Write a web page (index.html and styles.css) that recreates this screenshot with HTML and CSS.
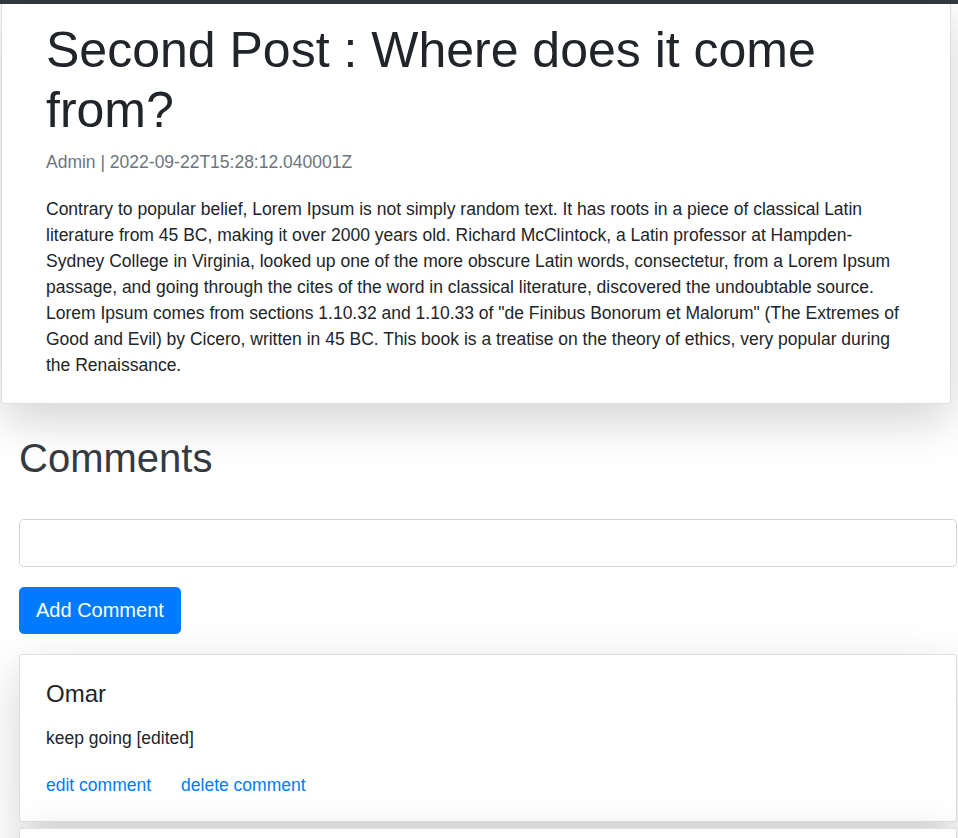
FILE: index.html
```html
<!DOCTYPE html>
<html lang="en">
<head>
<meta charset="utf-8">
<title>Second Post : Where does it come from?</title>
<link rel="stylesheet" href="styles.css">
</head>
<body>
<div class="navbar-edge"></div>
<main class="page">
  <article class="post-card">
    <h1 class="post-title">Second Post : Where does it come from?</h1>
    <p class="post-meta">Admin | 2022-09-22T15:28:12.040001Z</p>
    <p class="post-body">Contrary to popular belief, Lorem Ipsum is not simply random text. It has roots in a piece of classical Latin literature from 45 BC, making it over 2000 years old. Richard McClintock, a Latin professor at Hampden-Sydney College in Virginia, looked up one of the more obscure Latin words, consectetur, from a Lorem Ipsum passage, and going through the cites of the word in classical literature, discovered the undoubtable source. Lorem Ipsum comes from sections 1.10.32 and 1.10.33 of "de Finibus Bonorum et Malorum" (The Extremes of Good and Evil) by Cicero, written in 45 BC. This book is a treatise on the theory of ethics, very popular during the Renaissance.</p>
  </article>
  <section class="comments">
    <h2 class="comments-title">Comments</h2>
    <form class="comment-form">
      <input class="comment-input" type="text" aria-label="Comment">
      <button class="btn-primary" type="button">Add Comment</button>
    </form>
    <div class="comment-list">
      <div class="comment-card">
        <h4 class="comment-author">Omar</h4>
        <p class="comment-text">keep going [edited]</p>
        <div class="comment-actions">
          <a href="#" class="comment-link">edit comment</a>
          <a href="#" class="comment-link">delete comment</a>
        </div>
      </div>
      <div class="comment-card comment-card-next"></div>
    </div>
  </section>
</main>
</body>
</html>
```
FILE: styles.css
```css
html {
  overflow: hidden;
}

body {
  margin: 0;
  font-family: "Liberation Sans", Arial, sans-serif;
  font-size: 17.5px;
  line-height: 26px;
  color: #212529;
  background: #ffffff;
}

.navbar-edge {
  height: 4px;
  background: #343a40;
}

.page {
  display: flex;
  flex-direction: column;
}

.post-card {
  margin-left: 1px;
  width: 950px;
  box-sizing: border-box;
  border: 1px solid rgba(0, 0, 0, 0.125);
  border-top: 0;
  border-radius: 0 0 4px 4px;
  padding: 16px 43px 25px 44px;
  background: #ffffff;
  box-shadow: 0 16px 48px rgba(0, 0, 0, 0.175);
}

.post-title {
  margin: 0 0 9px;
  font-size: 50px;
  line-height: 60px;
  font-weight: 400;
  color: #212529;
}

.post-meta {
  margin: 0 0 21px;
  color: #6c757d;
}

.post-body {
  margin: 0;
}

.comments {
  margin-left: 19px;
  width: 938px;
}

.comments-title {
  margin: 30px 0 37px;
  font-size: 40px;
  line-height: 48px;
  font-weight: 400;
  color: #343a40;
}

.comment-form {
  display: flex;
  flex-direction: column;
  align-items: flex-start;
  gap: 20px;
  margin: 0;
}

.comment-input {
  display: block;
  width: 100%;
  height: 48px;
  box-sizing: border-box;
  border: 1px solid #ced4da;
  border-radius: 4.8px;
  background: #ffffff;
  padding: 8px 16px;
  font-family: inherit;
  font-size: 20px;
}

.btn-primary {
  font-family: inherit;
  font-size: 20px;
  line-height: 30px;
  padding: 7px 16px 8px;
  border: 1px solid #007bff;
  border-radius: 4.8px;
  background: #007bff;
  color: #ffffff;
  cursor: pointer;
}

.comment-list {
  display: flex;
  flex-direction: column;
  gap: 6px;
  margin-top: 20px;
}

.comment-card {
  border: 1px solid rgba(0, 0, 0, 0.125);
  border-radius: 4px;
  padding: 24px 25px 23px 26px;
  background: #ffffff;
  box-shadow: 0 16px 48px rgba(0, 0, 0, 0.175);
}

.comment-card-next {
  min-height: 80px;
}

.comment-author {
  margin: 0 0 17px;
  font-size: 24px;
  line-height: 29px;
  font-weight: 400;
  color: #212529;
}

.comment-text {
  margin: 0 0 21px;
}

.comment-actions {
  display: flex;
  gap: 30px;
}

.comment-link {
  color: #007bff;
  text-decoration: none;
}
```
